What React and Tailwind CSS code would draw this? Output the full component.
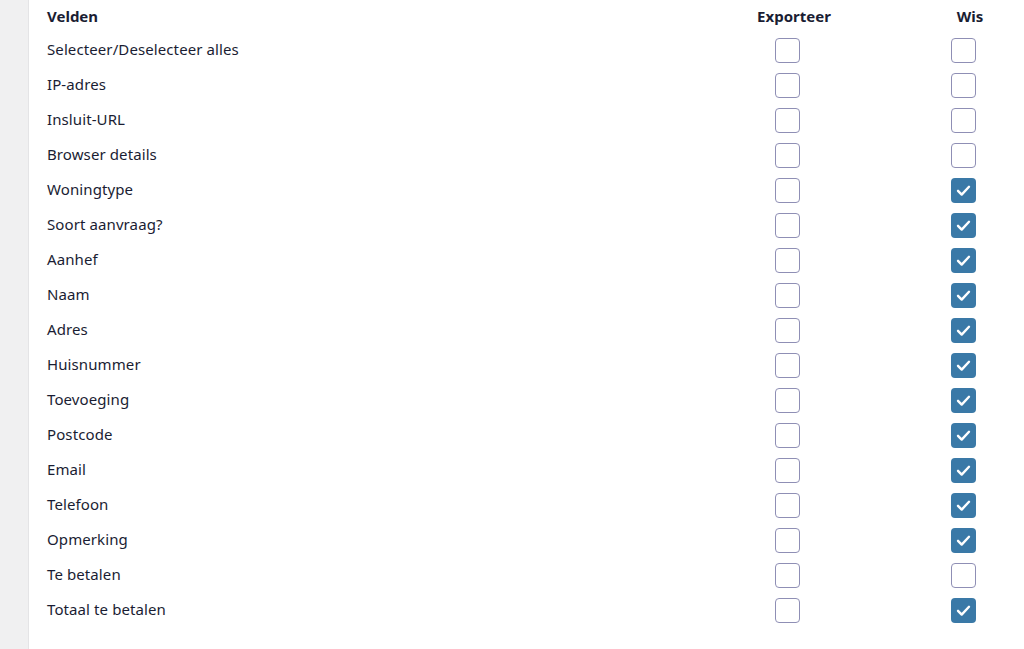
import React from 'react';

const fields = [
  ['Selecteer/Deselecteer alles', false],
  ['IP-adres', false],
  ['Insluit-URL', false],
  ['Browser details', false],
  ['Woningtype', true],
  ['Soort aanvraag?', true],
  ['Aanhef', true],
  ['Naam', true],
  ['Adres', true],
  ['Huisnummer', true],
  ['Toevoeging', true],
  ['Postcode', true],
  ['Email', true],
  ['Telefoon', true],
  ['Opmerking', true],
  ['Te betalen', false],
  ['Totaal te betalen', true],
];

function Box({ checked }) {
  if (checked) {
    return (
      <span className="mr-[13px] mt-[2px] block h-[25px] w-[25px] rounded-[4px] bg-[#3a79a7]">
        <svg width="25" height="25" viewBox="0 0 25 25" fill="none">
          <path d="M7 12.8 L10.7 16.6 L18 8.8" stroke="#fff" strokeWidth="2.4" strokeLinecap="round" strokeLinejoin="round" />
        </svg>
      </span>
    );
  }
  return <span className="mr-[13px] mt-[2px] block h-[25px] w-[25px] rounded-[4px] border border-[#8f8fb5] bg-white" />;
}

export default function App() {
  return (
    <div className="flex h-[649px] w-[1024px] overflow-hidden bg-white text-[#1a1d33]" style={{ fontFamily: '"Noto Sans", "Open Sans", sans-serif' }}>
      <div className="w-[29px] shrink-0 border-r border-[#e4e4e6] bg-[#f0f0f1]" />
      <div className="pl-[18px]">
        <div className="grid h-[32px] grid-cols-[700px_94px_89px_80px] items-center text-[15px] font-bold">
          <div>Velden</div>
          <div className="text-center">Exporteer</div>
          <div />
          <div className="text-center">Wis</div>
        </div>
        {fields.map(([label, wis]) => (
          <div key={label} className="grid h-[35px] grid-cols-[700px_94px_89px_80px] items-center text-[15px]">
            <div className="tracking-[0.1px]">{label}</div>
            <div className="flex justify-center">
              <Box checked={false} />
            </div>
            <div />
            <div className="flex justify-center">
              <Box checked={wis} />
            </div>
          </div>
        ))}
      </div>
    </div>
  );
}
